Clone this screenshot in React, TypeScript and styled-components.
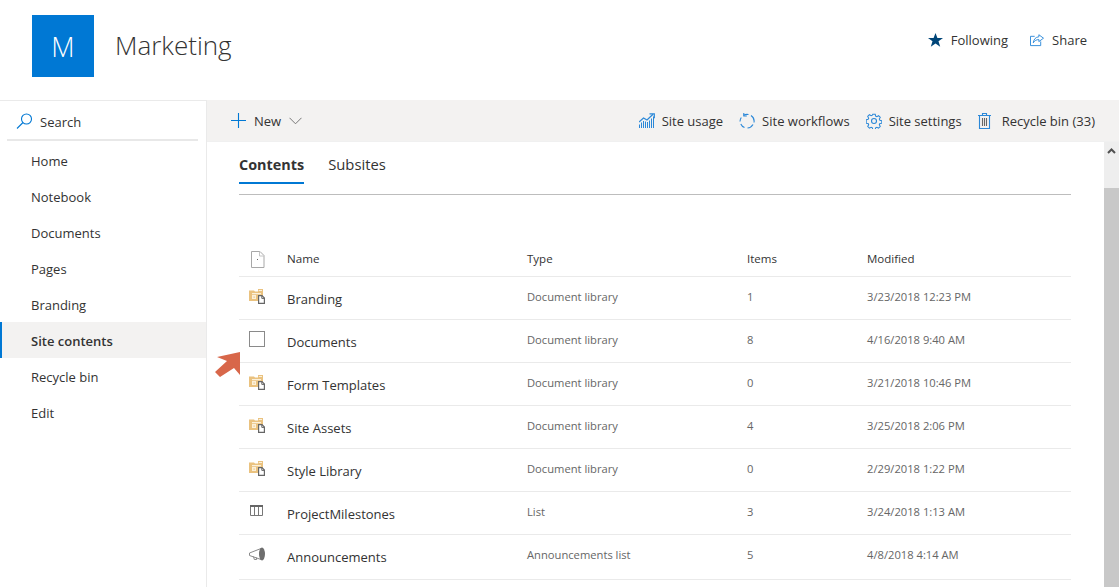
import React from 'react';
import styled, { createGlobalStyle } from 'styled-components';

const GlobalStyle = createGlobalStyle`
  html, body {
    margin: 0;
    padding: 0;
    height: 100%;
    overflow: hidden;
    background: #ffffff;
  }
  body {
    font-family: "Open Sans", "Noto Sans", "Liberation Sans", sans-serif;
    color: #333333;
  }
`;

const Page = styled.div`
  width: 1119px;
  height: 587px;
  display: flex;
  flex-direction: column;
  overflow: hidden;
`;

const Header = styled.header`
  height: 100px;
  flex: none;
  display: flex;
  align-items: flex-start;
  padding: 15px 32px 0 32px;
  box-sizing: border-box;
`;

const SiteLogo = styled.div`
  width: 62px;
  height: 62px;
  background: #0078d4;
  color: #ffffff;
  display: flex;
  align-items: center;
  justify-content: center;
  font-size: 27px;
  font-weight: 300;
`;

const SiteTitle = styled.h1`
  margin: 11px 0 0 21px;
  font-size: 26px;
  line-height: 38px;
  font-weight: 300;
  color: #333333;
  flex: 1;
`;

const HeaderActions = styled.div`
  display: flex;
  gap: 22px;
  margin-top: 16px;
`;

const HeaderAction = styled.span`
  display: flex;
  align-items: center;
  gap: 8px;
  font-size: 13px;
  line-height: 18px;
  color: #333333;
`;

const Body = styled.div`
  flex: 1;
  display: flex;
  min-height: 0;
`;

const Nav = styled.nav`
  width: 207px;
  flex: none;
  box-sizing: border-box;
  border-right: 1px solid #eaeaea;
`;

const SearchBox = styled.div`
  height: 41px;
  box-sizing: border-box;
  border-top: 1px solid #eaeaea;
  padding: 0 8px 0 7px;
  display: flex;
`;

const SearchField = styled.div`
  flex: 1;
  box-sizing: border-box;
  border-bottom: 2px solid #e8e8e8;
  padding: 3px 0 0 9px;
  display: flex;
  align-items: center;
  gap: 7px;
  font-size: 13px;
  color: #333333;
`;

const NavList = styled.div`
  margin-top: 1px;
`;

const NavItem = styled.div<{ $active?: boolean }>`
  height: 36px;
  box-sizing: border-box;
  padding: 1px 0 0 31px;
  line-height: 36px;
  font-size: 13px;
  color: #333333;
  font-weight: ${(p) => (p.$active ? 600 : 400)};
  background: ${(p) => (p.$active ? '#f3f2f1' : 'transparent')};
  box-shadow: ${(p) => (p.$active ? 'inset 2px 0 0 #0078d4' : 'none')};
`;

const Main = styled.main`
  flex: 1;
  min-width: 0;
  display: flex;
  flex-direction: column;
`;

const CommandBar = styled.div`
  height: 41px;
  flex: none;
  background: #f3f2f1;
  display: flex;
  align-items: center;
  justify-content: space-between;
  padding: 0 24px 0 24px;
  font-size: 13px;
  color: #333333;
`;

const CommandGroup = styled.div`
  display: flex;
  align-items: center;
  gap: 16px;
`;

const Command = styled.span<{ $gap?: number }>`
  display: flex;
  align-items: center;
  gap: ${(p) => p.$gap ?? 7}px;
  white-space: nowrap;
`;

const ContentWrap = styled.div`
  flex: 1;
  display: flex;
  min-height: 0;
  border-top: 1px solid #f0f0f0;
`;

const Content = styled.div`
  flex: 1;
  min-width: 0;
  padding: 0 33px 0 32px;
`;

const Tabs = styled.div`
  display: flex;
  gap: 24px;
  height: 53px;
  border-bottom: 1px solid #bdbdbd;
  box-sizing: border-box;
`;

const Tab = styled.div<{ $active?: boolean }>`
  height: 42px;
  line-height: 45px;
  box-sizing: border-box;
  font-size: ${(p) => (p.$active ? 14.4 : 14.8)}px;
  font-weight: ${(p) => (p.$active ? 700 : 400)};
  color: #333333;
  border-bottom: ${(p) => (p.$active ? '2px solid #0078d4' : 'none')};
`;

const Table = styled.div`
  margin-top: 44px;
`;

const Row = styled.div<{ $height: number }>`
  display: grid;
  grid-template-columns: 48px 240px 220px 120px 1fr;
  height: ${(p) => p.$height}px;
  box-sizing: border-box;
  border-bottom: 1px solid #eaeaea;
  position: relative;
`;

const IconCell = styled.div<{ $head?: boolean }>`
  padding-left: ${(p) => (p.$head ? 12 : 10)}px;
  padding-top: ${(p) => (p.$head ? 12 : 11)}px;
  box-sizing: border-box;
`;

const NameCell = styled.div<{ $head?: boolean }>`
  font-size: ${(p) => (p.$head ? 11.6 : 13)}px;
  line-height: 18px;
  color: #333333;
  padding-top: ${(p) => (p.$head ? 11 : 13)}px;
`;

const MetaCell = styled.div<{ $head?: boolean }>`
  font-size: ${(p) => (p.$head ? 11.5 : 11.2)}px;
  line-height: 18px;
  color: ${(p) => (p.$head ? '#333333' : '#666666')};
  padding-top: 11px;
`;

const Arrow = styled.svg`
  position: absolute;
  left: -24px;
  top: 32px;
`;

const ScrollBar = styled.div`
  width: 15px;
  flex: none;
  background: #eeeeee;
  display: flex;
  flex-direction: column;
`;

const ScrollButton = styled.div`
  height: 46px;
  display: flex;
  justify-content: center;
  padding-top: 6px;
  box-sizing: border-box;
`;

const ScrollThumb = styled.div`
  flex: 1;
  background: #c8c8c8;
`;

const LibraryIcon = () => (
  <svg width="17" height="17" viewBox="0 0 17 17" style={{ display: 'block' }}>
    <path d="M0 2.500h5l1 1h3V1h5v12H0z" fill="#eac27f" />
    <path d="M9.800 2h3.200v1H9.800zM3 5h9v1.200H3zM3 7h4v4H3z" fill="#fbf0da" />
    <path d="M4.500 8.500h1.200v1.200H4.500z" fill="#eac27f" />
    <path d="M9.600 7.600h3.400l2.400 2.400v5.400H9.600z" fill="#ffffff" stroke="#666666" strokeWidth="1.200" />
    <path d="M12.800 7.600v2.800h2.600" fill="none" stroke="#666666" />
  </svg>
);

const BlankIcon = () => (
  <svg width="17" height="17" viewBox="0 0 17 17" style={{ display: 'block' }}>
    <rect x="0.500" y="0.500" width="15" height="15" fill="#ffffff" stroke="#8a8a8a" />
  </svg>
);

const ListIcon = () => (
  <svg width="15" height="13" viewBox="0 0 15 13" style={{ display: 'block', marginTop: 1 }}>
    <path d="M1.500 1.500h12v10h-12z" fill="none" stroke="#777777" />
    <path d="M1 1h13v2H1z" fill="#666666" />
    <path d="M5.500 3v8.500M9.500 3v8.500" stroke="#777777" />
  </svg>
);

const MegaphoneIcon = () => (
  <svg width="17" height="15" viewBox="0 0 17 15" style={{ display: 'block', marginTop: 1 }}>
    <path d="M.5 6l11.500-4.500v11L.5 8.500z" fill="#ffffff" stroke="#8a8a8a" />
    <path d="M4.500 9.500l.8 3h2.400l-.4-2" fill="none" stroke="#8a8a8a" />
    <ellipse cx="13" cy="7" rx="3" ry="6.500" fill="#6e6e6e" />
  </svg>
);

const FileIcon = () => (
  <svg width="14" height="17" viewBox="0 0 14 17" style={{ display: 'block' }}>
    <path d="M.5 .5h8.500l4 4v12H.5z" fill="#ffffff" stroke="#a8a8a8" />
    <path d="M8.500 .5v4.500h4.500" fill="none" stroke="#c4c4c4" />
    <rect x="6" y="8" width="1" height="1" fill="#666666" />
  </svg>
);

const SearchIcon = () => (
  <svg width="17" height="17" viewBox="0 0 17 17" fill="none" stroke="#0078d4" strokeWidth="1.100">
    <circle cx="10.500" cy="6" r="5" />
    <path d="M7 9.500L1 15.500" />
  </svg>
);

const PlusIcon = () => (
  <svg width="15" height="15" viewBox="0 0 15 15" stroke="#0078d4" strokeWidth="1.100">
    <path d="M7.500 0v15M0 7.500h15" />
  </svg>
);

const ChevronIcon = () => (
  <svg width="13" height="8" viewBox="0 0 13 8" fill="none" stroke="#777777" strokeWidth="1">
    <path d="M.5 .8l6 6 6-6" />
  </svg>
);

const StarIcon = () => (
  <svg width="15" height="14" viewBox="0 0 15 14">
    <path d="M7.500 0l1.900 5h5.600l-4.500 3.300 1.700 5.500-4.700-3.400-4.700 3.400 1.700-5.500L0 5h5.600z" fill="#004578" />
  </svg>
);

const ShareIcon = () => (
  <svg width="14" height="13" viewBox="0 0 15 14" fill="none" stroke="#2b88d8" strokeWidth="1">
    <path d="M5 2.500H.5v10h11V8" />
    <path d="M9.500 .8l5 3.700-5 3.700V6C7 6 5 7 3.500 9.500 3.800 6 6 3.200 9.500 3z" />
  </svg>
);

const UsageIcon = () => (
  <svg width="16" height="15" viewBox="0 0 16 15" stroke="#2b88d8" strokeWidth="1" fill="none">
    <path d="M.5 15v-3.500M2.500 15V9.500M4.500 15V8M6.500 15V8.500M8.500 15V9M10.500 15V7.500M12.500 15V5.500M14.500 15V3.500" />
    <path d="M0 9l4.500-4 3.500 2L14 1.200" strokeWidth="1.200" />
    <path d="M10.500.8h4.800v4.500" strokeWidth="1.200" />
  </svg>
);

const WorkflowIcon = () => (
  <svg width="16" height="16" viewBox="0 0 16 16" fill="none" stroke="#2b88d8" strokeWidth="1.100">
    <path d="M2.300 4.500A7 7 0 0 0 1 8.500" />
    <path d="M1.800 11A7 7 0 0 0 5.500 14.600" />
    <path d="M8.500 15a7 7 0 0 0 5.500-3.500" />
    <path d="M15 9.500a7 7 0 0 0-3-7" />
    <path d="M9.500 1.500A7 7 0 0 0 4.500 2.300" />
    <path d="M4.800 0v3h3" />
  </svg>
);

const GearIcon = () => (
  <svg width="16" height="16" viewBox="0 0 16 16" fill="none" stroke="#2b88d8" strokeWidth="1.100">
    <circle cx="8" cy="8" r="2.500" />
    <path d="M6.700.8h2.600l.4 2 1.300.6 1.800-1 1.800 1.800-1 1.800.6 1.300 2 .4v2.600l-2 .4-.6 1.300 1 1.800-1.800 1.800-1.800-1-1.300.6-.4 2H6.700l-.4-2-1.300-.6-1.800 1-1.800-1.800 1-1.800-.6-1.300-2-.4V6.700l2-.4.6-1.300-1-1.800 1.800-1.800 1.800 1 1.300-.6z" transform="translate(.4 .4) scale(.95)" />
  </svg>
);

const BinIcon = () => (
  <svg width="13" height="16" viewBox="0 0 13 16" fill="none" stroke="#2b88d8" strokeWidth="1.100">
    <path d="M0 2.500h13M4.500 2.500V.5h4v2M1.500 2.500v13h10v-13" />
    <path d="M4.500 5v8M6.500 5v8M8.500 5v8" stroke="#666666" />
  </svg>
);

const ScrollUpIcon = () => (
  <svg width="9" height="6" viewBox="0 0 9 6" fill="none" stroke="#505050" strokeWidth="2">
    <path d="M1 5l3.500-3.500L8 5" />
  </svg>
);

type Item = {
  name: string;
  type: string;
  items: number;
  modified: string;
  icon: React.ReactNode;
  height?: number;
};

const rows: Item[] = [
  { name: 'Branding', type: 'Document library', items: 1, modified: '3/23/2018 12:23 PM', icon: <LibraryIcon /> },
  { name: 'Documents', type: 'Document library', items: 8, modified: '4/16/2018 9:40 AM', icon: <BlankIcon /> },
  { name: 'Form Templates', type: 'Document library', items: 0, modified: '3/21/2018 10:46 PM', icon: <LibraryIcon /> },
  { name: 'Site Assets', type: 'Document library', items: 4, modified: '3/25/2018 2:06 PM', icon: <LibraryIcon /> },
  { name: 'Style Library', type: 'Document library', items: 0, modified: '2/29/2018 1:22 PM', icon: <LibraryIcon /> },
  { name: 'ProjectMilestones', type: 'List', items: 3, modified: '3/24/2018 1:13 AM', icon: <ListIcon /> },
  { name: 'Announcements', type: 'Announcements list', items: 5, modified: '4/8/2018 4:14 AM', icon: <MegaphoneIcon />, height: 45 },
];

const navItems = ['Home', 'Notebook', 'Documents', 'Pages', 'Branding', 'Site contents', 'Recycle bin', 'Edit'];

export default function App() {
  return (
    <Page>
      <GlobalStyle />
      <Header>
        <SiteLogo>M</SiteLogo>
        <SiteTitle>Marketing</SiteTitle>
        <HeaderActions>
          <HeaderAction><StarIcon />Following</HeaderAction>
          <HeaderAction><ShareIcon />Share</HeaderAction>
        </HeaderActions>
      </Header>
      <Body>
        <Nav>
          <SearchBox>
            <SearchField><SearchIcon />Search</SearchField>
          </SearchBox>
          <NavList>
            {navItems.map((n) => (
              <NavItem key={n} $active={n === 'Site contents'}>{n}</NavItem>
            ))}
          </NavList>
        </Nav>
        <Main>
          <CommandBar>
            <CommandGroup>
              <Command $gap={8}><PlusIcon />New<ChevronIcon /></Command>
            </CommandGroup>
            <CommandGroup>
              <Command><UsageIcon />Site usage</Command>
              <Command><WorkflowIcon />Site workflows</Command>
              <Command><GearIcon />Site settings</Command>
              <Command $gap={11}><BinIcon />Recycle bin (33)</Command>
            </CommandGroup>
          </CommandBar>
          <ContentWrap>
            <Content>
              <Tabs>
                <Tab $active>Contents</Tab>
                <Tab>Subsites</Tab>
              </Tabs>
              <Table>
                <Row $height={38}>
                  <IconCell $head><FileIcon /></IconCell>
                  <NameCell $head>Name</NameCell>
                  <MetaCell $head>Type</MetaCell>
                  <MetaCell $head>Items</MetaCell>
                  <MetaCell $head>Modified</MetaCell>
                </Row>
                {rows.map((r) => (
                  <Row key={r.name} $height={r.height ?? 43}>
                    {r.name === 'Documents' && (
                      <Arrow width="26" height="26" viewBox="0 0 26 26">
                        <path d="M25 0v23l-6-7L5 25 0 20 12 9 2 5z" fill="#d8674a" />
                      </Arrow>
                    )}
                    <IconCell>{r.icon}</IconCell>
                    <NameCell>{r.name}</NameCell>
                    <MetaCell>{r.type}</MetaCell>
                    <MetaCell>{r.items}</MetaCell>
                    <MetaCell>{r.modified}</MetaCell>
                  </Row>
                ))}
              </Table>
            </Content>
            <ScrollBar>
              <ScrollButton><ScrollUpIcon /></ScrollButton>
              <ScrollThumb />
            </ScrollBar>
          </ContentWrap>
        </Main>
      </Body>
    </Page>
  );
}
